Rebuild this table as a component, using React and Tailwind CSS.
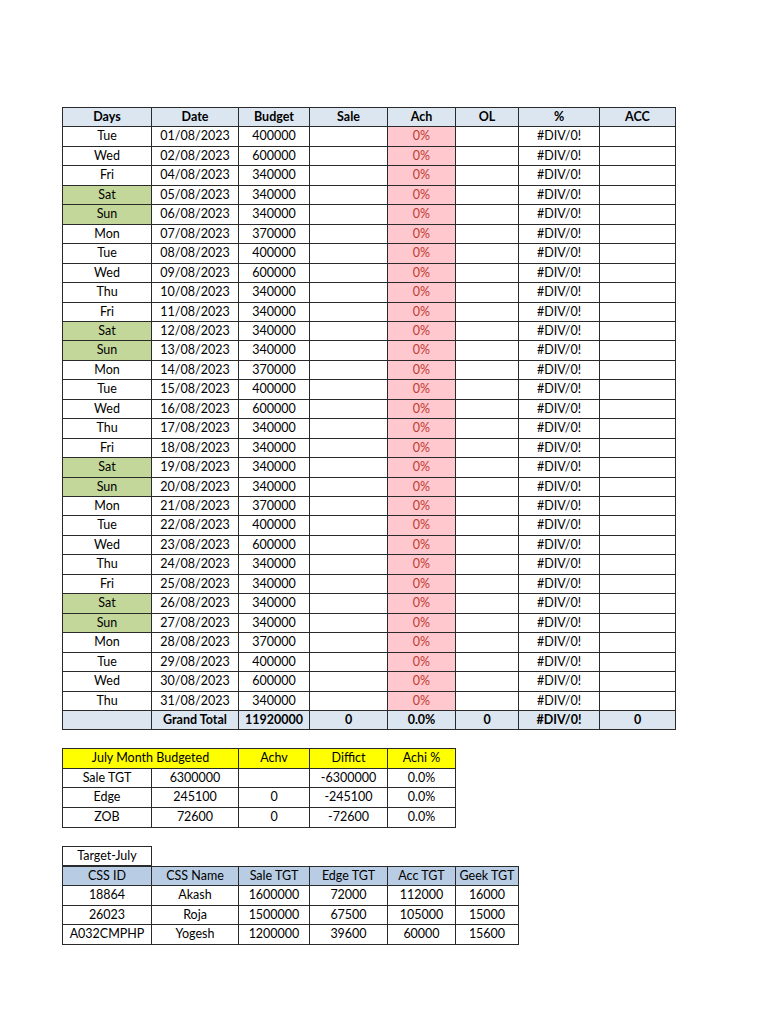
const days = [
  ['Tue', '01/08/2023', '400000'],
  ['Wed', '02/08/2023', '600000'],
  ['Fri', '04/08/2023', '340000'],
  ['Sat', '05/08/2023', '340000'],
  ['Sun', '06/08/2023', '340000'],
  ['Mon', '07/08/2023', '370000'],
  ['Tue', '08/08/2023', '400000'],
  ['Wed', '09/08/2023', '600000'],
  ['Thu', '10/08/2023', '340000'],
  ['Fri', '11/08/2023', '340000'],
  ['Sat', '12/08/2023', '340000'],
  ['Sun', '13/08/2023', '340000'],
  ['Mon', '14/08/2023', '370000'],
  ['Tue', '15/08/2023', '400000'],
  ['Wed', '16/08/2023', '600000'],
  ['Thu', '17/08/2023', '340000'],
  ['Fri', '18/08/2023', '340000'],
  ['Sat', '19/08/2023', '340000'],
  ['Sun', '20/08/2023', '340000'],
  ['Mon', '21/08/2023', '370000'],
  ['Tue', '22/08/2023', '400000'],
  ['Wed', '23/08/2023', '600000'],
  ['Thu', '24/08/2023', '340000'],
  ['Fri', '25/08/2023', '340000'],
  ['Sat', '26/08/2023', '340000'],
  ['Sun', '27/08/2023', '340000'],
  ['Mon', '28/08/2023', '370000'],
  ['Tue', '29/08/2023', '400000'],
  ['Wed', '30/08/2023', '600000'],
  ['Thu', '31/08/2023', '340000'],
];

// spreadsheet rows are ~19.45px tall, spread the rounding over the rows
const rowH = (i, step) => Math.round((i + 1) * step) - Math.round(i * step);

const Cell = ({ children, className = '', h }) => (
  <div
    className={`flex items-center justify-center border-r border-b border-[#2a2a2a] whitespace-nowrap leading-none ${className}`}
    style={{ height: h }}
  >
    {children}
  </div>
);

const MainTable = () => {
  const head = ['Days', 'Date', 'Budget', 'Sale', 'Ach', 'OL', '%', 'ACC'];
  return (
    <div className="grid grid-cols-[89px_87px_71px_78px_68px_63px_81px_76px] w-fit border-l border-t border-[#2a2a2a]">
      {head.map((t) => (
        <Cell key={t} h={rowH(0, 19.45)} className="bg-[#dce6f1] font-bold">{t}</Cell>
      ))}
      {days.map(([d, date, budget], i) => {
        const h = rowH(i + 1, 19.45);
        const weekend = d === 'Sat' || d === 'Sun';
        return [
          <Cell key={`d${i}`} h={h} className={weekend ? 'bg-[#c4d79b]' : ''}>{d}</Cell>,
          <Cell key={`t${i}`} h={h}>{date}</Cell>,
          <Cell key={`b${i}`} h={h}>{budget}</Cell>,
          <Cell key={`s${i}`} h={h}></Cell>,
          <Cell key={`a${i}`} h={h} className="bg-[#ffc7ce] text-[#c0392f]">0%</Cell>,
          <Cell key={`o${i}`} h={h}></Cell>,
          <Cell key={`p${i}`} h={h}>#DIV/0!</Cell>,
          <Cell key={`c${i}`} h={h}></Cell>,
        ];
      })}
      {['', 'Grand Total', '11920000', '0', '0.0%', '0', '#DIV/0!', '0'].map((t, i) => (
        <Cell key={`g${i}`} h={rowH(31, 19.45)} className="bg-[#dce6f1] font-bold">{t}</Cell>
      ))}
    </div>
  );
};

const BudgetTable = () => {
  const rows = [
    ['Sale TGT', '6300000', '', '-6300000', '0.0%'],
    ['Edge', '245100', '0', '-245100', '0.0%'],
    ['ZOB', '72600', '0', '-72600', '0.0%'],
  ];
  return (
    <div className="grid grid-cols-[89px_87px_71px_78px_68px] w-fit border-l border-t border-[#2a2a2a]">
      <Cell h={20} className="col-span-2 bg-[#ffff00]">July Month Budgeted</Cell>
      <Cell h={20} className="bg-[#ffff00]">Achv</Cell>
      <Cell h={20} className="bg-[#ffff00]">Diffict</Cell>
      <Cell h={20} className="bg-[#ffff00]">Achi %</Cell>
      {rows.map((r, i) =>
        r.map((t, j) => (
          <Cell key={`${i}-${j}`} h={i === 0 ? 19 : 20}>{t}</Cell>
        ))
      )}
    </div>
  );
};

const TargetTable = () => {
  const head = ['CSS ID', 'CSS Name', 'Sale TGT', 'Edge TGT', 'Acc TGT', 'Geek TGT'];
  const rows = [
    ['18864', 'Akash', '1600000', '72000', '112000', '16000'],
    ['26023', 'Roja', '1500000', '67500', '105000', '15000'],
    ['A032CMPHP', 'Yogesh', '1200000', '39600', '60000', '15600'],
  ];
  return (
    <div className="flex flex-col">
      <div className="w-[90px] border-l border-t border-[#2a2a2a]">
        <Cell h={19}>Target-July</Cell>
      </div>
      <div className="grid grid-cols-[89px_87px_71px_78px_68px_63px] w-fit border-l border-t border-[#2a2a2a]">
        {head.map((t) => (
          <Cell key={t} h={19} className="bg-[#b8cce4]">{t}</Cell>
        ))}
        {rows.map((r, i) =>
          r.map((t, j) => (
            <Cell key={`${i}-${j}`} h={i === 1 ? 19 : 20}>{t}</Cell>
          ))
        )}
      </div>
    </div>
  );
};

export default function App() {
  return (
    <div className="w-[768px] h-[1024px] bg-white text-black text-[12.5px] font-['Lato',sans-serif] pl-[62px] pt-[107px] flex flex-col">
      <MainTable />
      <div className="mt-[18px]">
        <BudgetTable />
      </div>
      <div className="mt-[18px]">
        <TargetTable />
      </div>
    </div>
  );
}
